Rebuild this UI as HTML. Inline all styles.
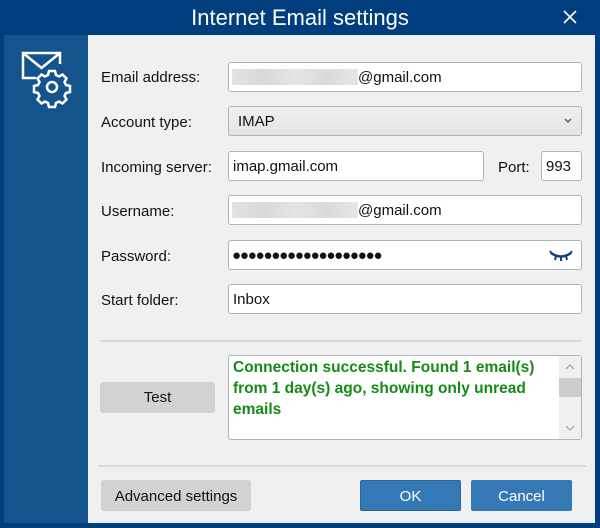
<!DOCTYPE html>
<html><head><meta charset="utf-8"><style>
*{box-sizing:border-box;margin:0;padding:0}
body{width:600px;height:528px;background:#003e7e;font-family:"Liberation Sans",sans-serif;position:relative;overflow:hidden}
.title{position:absolute;left:0;top:0;width:600px;height:35px;color:#fff;font-size:22px;text-align:center;line-height:35px}
.close{position:absolute;left:561px;top:8px}
.side{position:absolute;left:4px;top:35px;width:84px;height:488px;background:#14538c}
.main{position:absolute;left:88px;top:35px;width:507px;height:488px;background:#f0f0f0}
.lbl{position:absolute;left:101px;font-size:15px;color:#111}
.in{position:absolute;background:#fff;border:1px solid #b4b4b4;border-radius:3px;font-size:15px;color:#111;padding-left:7px;line-height:30px}
.blur{display:inline-block;width:126px;height:16px;background:linear-gradient(90deg,#e2e2e2,#d9d9d9,#e4e4e4,#dadada,#e6e6e6);vertical-align:-3px;margin-left:-4px}
.sep{position:absolute;height:2px;background:#dadada}
.btn{position:absolute;background:#d2d2d2;border-radius:3px;font-size:15px;text-align:center;color:#111}
.bb{position:absolute;background:#3478b6;border:1px solid #2a64a0;border-radius:2px;color:#fff;font-size:15px;text-align:center;line-height:31px}
</style></head><body>
<div class="title">Internet Email settings</div>
<svg class="close" width="18" height="18" viewBox="0 0 18 18"><path d="M3 3L15 15M15 3L3 15" stroke="#fff" stroke-width="1.6"/></svg>
<div class="side"><svg width="84" height="80" viewBox="0 0 84 80">
<g fill="none" stroke="#fff" stroke-width="2.5">
<path d="M32 43H19V18H56V29"/><path d="M19 18L37.5 33L56 18"/>
<circle cx="48" cy="52" r="5"/>
<path d="M45 36h6l1 4 3 1.5 3.5-2 4 4-2 3.5 1.5 3 4 1v6l-4 1-1.5 3 2 3.5-4 4-3.5-2-3 1.5-1 4h-6l-1-4-3-1.5-3.5 2-4-4 2-3.5-1.5-3-4-1v-6l4-1 1.5-3-2-3.5 4-4 3.5 2 3-1.5z"/>
</g></svg></div>
<div class="main"></div>
<div class="lbl" style="top:69px">Email address:</div>
<div class="in" style="left:228px;top:62px;width:354px;height:30px"><span class="blur"></span>@gmail.com</div>
<div class="lbl" style="top:114px">Account type:</div>
<div class="in" style="left:228px;top:106px;width:354px;height:30px;background:linear-gradient(#f0f0f0,#e4e4e4);padding-left:9px">IMAP<svg style="position:absolute;right:9px;top:11px" width="8" height="6"><path d="M1 1L4 4L7 1" stroke="#555" fill="none" stroke-width="1.3"/></svg></div>
<div class="lbl" style="top:159px">Incoming server:</div>
<div class="in" style="left:228px;top:151px;width:256px;height:30px;padding-left:4px">imap.gmail.com</div>
<div class="lbl" style="top:159px;left:498px">Port:</div>
<div class="in" style="left:541px;top:151px;width:41px;height:30px;padding-left:4px">993</div>
<div class="lbl" style="top:203px">Username:</div>
<div class="in" style="left:228px;top:195px;width:354px;height:30px"><span class="blur"></span>@gmail.com</div>
<div class="lbl" style="top:248px">Password:</div>
<div class="in" style="left:228px;top:240px;width:354px;height:30px;padding-left:3px;font-size:15px;letter-spacing:-1.2px;line-height:29px">●●●●●●●●●●●●●●●●●●●
<svg style="position:absolute;right:8px;top:9px" width="24" height="12" viewBox="0 0 24 12"><path d="M2 3Q12 10 22 3" stroke="#0e3f7e" stroke-width="2.5" fill="none"/><path d="M1 1L3 4M23 1L21 4M7 6L6 10M12 7V11M17 6L18 10" stroke="#0e3f7e" stroke-width="2"/></svg></div>
<div class="lbl" style="top:292px">Start folder:</div>
<div class="in" style="left:228px;top:284px;width:354px;height:30px;padding-left:4px">Inbox</div>
<div class="sep" style="left:100px;top:340px;width:482px"></div>
<div class="btn" style="left:100px;top:382px;width:115px;height:31px;line-height:31px">Test</div>
<div class="in" style="left:228px;top:355px;width:354px;height:85px;padding:1px 26px 1px 4px;color:#168a16;font-weight:bold;line-height:21px;font-size:15.5px">Connection successful. Found 1 email(s) from 1 day(s) ago, showing only unread emails
<div style="position:absolute;right:0;top:0;width:22px;height:83px;background:#f0f0f0"></div>
<div style="position:absolute;right:0;top:22px;width:22px;height:19px;background:#cdcdcd"></div>
<svg style="position:absolute;right:6px;top:8px" width="10" height="6"><path d="M1 5L5 1L9 5" stroke="#999" fill="none"/></svg>
<svg style="position:absolute;right:6px;bottom:8px" width="10" height="6"><path d="M1 1L5 5L9 1" stroke="#999" fill="none"/></svg></div>
<div class="sep" style="left:98px;top:465px;width:488px"></div>
<div class="btn" style="left:101px;top:480px;width:150px;height:31px;line-height:33px">Advanced settings</div>
<div class="bb" style="left:360px;top:480px;width:101px;height:31px">OK</div>
<div class="bb" style="left:471px;top:480px;width:101px;height:31px;border-color:#3478b6">Cancel</div>
</body></html>
